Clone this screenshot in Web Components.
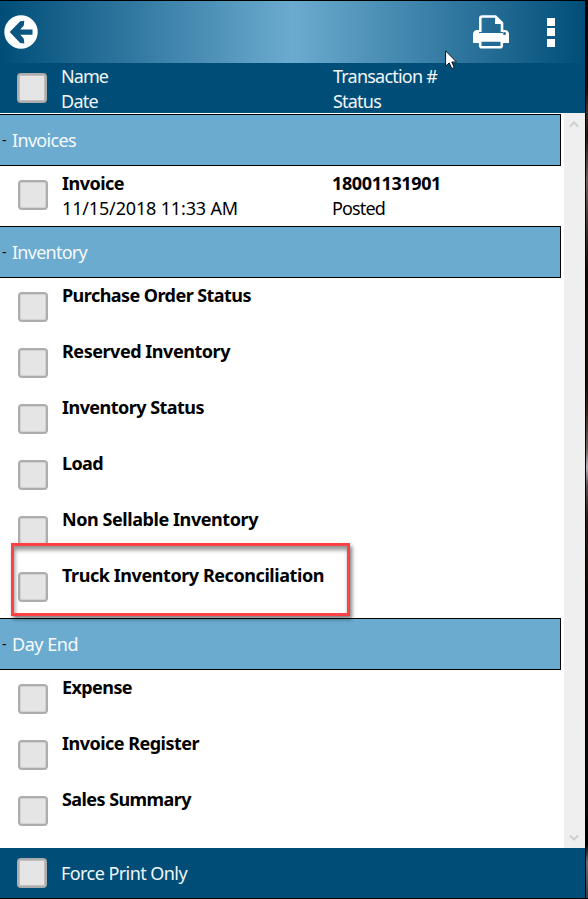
<!DOCTYPE html>
<html lang="en"><head><meta charset="utf-8"><title>Print documents</title>
<style>html,body{margin:0;height:100%;overflow:hidden}body{background:#000;font:18px/25px "Noto Sans","Open Sans",sans-serif}</style></head>
<body>
<print-app></print-app>
<script>
const define=(name,html,ready)=>customElements.define(name,class extends HTMLElement{
  connectedCallback(){
    if(this.shadowRoot)return;
    this.attachShadow({mode:'open'}).innerHTML=html;
    if(ready)ready.call(this);
  }
});

// A single line of text spaced to fill the width given in "w".
define('fit-text','<style>:host{display:block;white-space:nowrap;height:25px}</style><span></span>',function(){
  const s=this.shadowRoot.querySelector('span');
  s.textContent=this.getAttribute('text');
  const w=+this.getAttribute('w');
  if(w)s.style.letterSpacing=(w-s.getBoundingClientRect().width)/s.textContent.length+'px';
});

define('check-box','<style>:host{display:block;box-sizing:border-box;width:30px;height:30px;flex:none;border:2px solid #adadad;border-radius:4px;background:#e5e5e5;box-shadow:inset 0 0 0 1px var(--inner,#d2d2d2)}</style>');

define('tool-bar',`<style>
:host{display:flex;align-items:center;height:62px;box-sizing:border-box;padding:0 30px 0 4px;background:linear-gradient(90deg,#004e78,#6cabd0 50%,#004e78)}
svg{display:block;flex:none}.gap{flex:1}.print{margin-right:38px}
</style>
<svg width="34" height="34" viewBox="0 0 34 34"><circle cx="17" cy="17" r="16.7" fill="#fff"/><path d="M5.7 17 16.2 6.2 20.3 5.8 19.8 10.5 16.3 14.4H28.5V19.8H16.3L19.8 23.7 20.3 28.4 16.2 28Z" fill="#0c557f"/></svg>
<span class="gap"></span>
<svg class="print" width="36" height="34" viewBox="0 0 36 34"><path d="M7.3 17V3.5Q7.3 1.5 9.3 1.5H22.5L29 8V17" fill="none" stroke="#fff" stroke-width="2.6"/><path d="M22 1V9H30Z" fill="#fff"/><path d="M6 15V18H30V15H31.500Q36 15 36 19.500V28H0V19.500Q0 15 4.500 15Z" fill="#fff"/><path d="M7.200 25.500H28.800V30.500Q28.800 32.300 27 32.300H9Q7.200 32.300 7.200 30.500Z" fill="#216b95" stroke="#fff" stroke-width="2.600"/><circle cx="31.500" cy="18.500" r="1.500" fill="#216b95"/></svg>
<svg width="8" height="30" viewBox="0 0 8 30"><path d="M0 1H8V9H0ZM0 11H8V19H0ZM0 22H8V30H0Z" fill="#fff" shape-rendering="crispEdges"/></svg>`);

define('column-header',`<style>:host{--inner:#c0c0c0;display:grid;grid-template-columns:30px 258px 1fr;column-gap:14px;height:50px;box-sizing:border-box;padding:1px 0 0 17px;background:#004e78;color:#f2f6f9}
check-box{margin-top:9px}</style><check-box></check-box><div><fit-text text="Name" w="47"></fit-text><fit-text text="Date" w="37"></fit-text></div>
<div><fit-text text="Transaction #" w="104"></fit-text><fit-text text="Status" w="48"></fit-text></div>`);

define('doc-row',`<style>:host{display:grid;grid-template-columns:30px 256px 1fr;column-gap:14px;box-sizing:border-box;height:56px;padding:5px 0 0 18px;color:#000}
check-box{margin-top:9px}.t{font-weight:700}</style><check-box></check-box><div class="one"></div><div class="two"></div>`,function(){
  const [name,w,date,dw,num,nw,st,sw]=this.getAttribute('data').split('|');
  const r=this.shadowRoot,line=(t,w,b)=>t?`<fit-text ${b?'class="t"':''} text="${t}" w="${w}"></fit-text>`:'';
  r.querySelector('.one').innerHTML=line(name,w,1)+line(date,dw);
  r.querySelector('.two').innerHTML=line(num,nw,1)+line(st,sw);
});

define('doc-group',`<style>:host{display:block;padding-bottom:4px}
header{display:flex;align-items:center;height:52px;box-sizing:border-box;border:solid #000;border-width:1px 1px 1px 0;background:#6cabd0;color:#f6fafc;padding:0 0 0 2px}
i{font:14px/20px "Noto Sans",sans-serif;color:#000;width:10px}</style><header><i>-</i><fit-text></fit-text></header><slot></slot>`,function(){
  const f=document.createElement('fit-text');
  f.setAttribute('text',this.getAttribute('label'));f.setAttribute('w',this.getAttribute('w'));
  this.shadowRoot.querySelector('fit-text').replaceWith(f);
});

define('scroll-rail',`<style>:host{display:flex;flex-direction:column;justify-content:space-between;align-items:center;width:21px;box-sizing:border-box;padding:7px 1px 6px 0;background:#efefef}svg{display:block}</style>
<svg width="10" height="8"><path d="M1 6.5 5 2.5 9 6.5" fill="none" stroke="#d0d0d0" stroke-width="2"/></svg><svg width="10" height="8"><path d="M1 1.5 5 5.5 9 1.5" fill="none" stroke="#d0d0d0" stroke-width="2"/></svg>`);

define('foot-bar',`<style>:host{--inner:#c0c0c0;display:flex;gap:14px;height:50px;box-sizing:border-box;padding:10px 0 0 17px;background:#004e78;color:#f2f6f9}fit-text{margin-top:3px}</style><check-box></check-box><fit-text text="Force Print Only" w="126"></fit-text>`);

define('call-out','<style>:host{position:absolute;left:11px;top:543px;width:339px;height:73px;box-sizing:border-box;border:3px solid #ff4044;box-shadow:2px 3px 4px rgba(0,0,0,.5),inset 1px 4px 4px rgba(0,0,0,.42)}</style>');

define('mouse-pointer','<style>:host{position:absolute;left:445px;top:50px}svg{display:block}</style><svg width="13" height="20"><path d="M.6 .8V16.2L4.2 12.9 6.8 18.6 9.3 17.4 6.8 12H11.5Z" fill="#fff" stroke="#061425"/></svg>');

define('print-app',`<style>
:host{display:grid;grid-template-columns:585px 1px 2px;height:899px;box-sizing:border-box;padding:1px 0;position:relative;background:#000}
main{display:grid;grid-template-rows:62px 50px 735px 50px}
.body{display:grid;grid-template-columns:561px 3px 21px;background:#fff}.list{padding-top:1px}
.edge{grid-column:3;background:linear-gradient(#050303,#170c08 10%,#432a23 12%,#211311 15%,#705c5e 20%,#49383a 24%,#120a08 30%,#1b0f0a 43%,#3c2418 46%,#6b625f 50%,#b3adb8 52%,#5c4b52 54%,#291710 58%,#110b0b 66%,#080606 90%,#000 94%,#6a6a6a 96%,#3a3a3a)}
</style>
<main><tool-bar></tool-bar><column-header></column-header>
<div class="body"><div class="list">
<doc-group label="Invoices" w="64"><doc-row data="Invoice|62|11/15/2018 11:33 AM|176|18001131901|109|Posted|53"></doc-row></doc-group>
<doc-group label="Inventory" w="75"><doc-row data="Purchase Order Status|189"></doc-row><doc-row data="Reserved Inventory|168"></doc-row><doc-row data="Inventory Status|142"></doc-row><doc-row data="Load|41"></doc-row><doc-row data="Non Sellable Inventory|196"></doc-row><doc-row data="Truck Inventory Reconciliation|262"></doc-row></doc-group>
<doc-group label="Day End" w="66"><doc-row data="Expense|70"></doc-row><doc-row data="Invoice Register|137"></doc-row><doc-row data="Sales Summary|129"></doc-row></doc-group>
</div><span></span><scroll-rail></scroll-rail></div>
<foot-bar></foot-bar></main><div class="edge"></div>
<call-out></call-out><mouse-pointer></mouse-pointer>`);
</script>
</body></html>
